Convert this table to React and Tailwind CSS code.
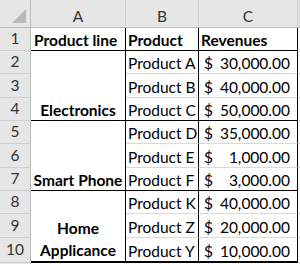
import React from 'react';

const rows = [
  { n: 1, b: 'Product', c: null, h: 'border-b-black' },
  { n: 2, b: 'Product A', c: '30,000.00' },
  { n: 3, b: 'Product B', c: '40,000.00' },
  { n: 4, b: 'Product C', c: '50,000.00', h: 'border-b-black' },
  { n: 5, b: 'Product D', c: '35,000.00' },
  { n: 6, b: 'Product E', c: '1,000.00' },
  { n: 7, b: 'Product F', c: '3,000.00', h: 'border-b-black' },
  { n: 8, b: 'Product K', c: '40,000.00' },
  { n: 9, b: 'Product Z', c: '20,000.00' },
  { n: 10, b: 'Product Y', c: '10,000.00', h: 'border-b-black' },
];

// row number -> grid line
const rowLine = ['row-start-2', 'row-start-3', 'row-start-4', 'row-start-5', 'row-start-6', 'row-start-7', 'row-start-8', 'row-start-9', 'row-start-10', 'row-start-11'];

function App() {
  return (
    <div className="w-[300px] h-[264px] overflow-hidden bg-white text-[15.5px] text-black font-['Lato','Liberation_Sans',sans-serif]">
      <div className="grid grid-cols-[31px_95px_73px_99px_1fr] grid-rows-[28px_23px_23px_24px_23px_23px_24px_23px_23px_24px_25px_1fr] h-full">
        {/* Header row */}
        <div className="bg-[#e6e6e6] border-r border-b border-[#bdbdbd] flex items-end justify-end p-[3px]">
          <svg width="16" height="16" viewBox="0 0 16 16">
            <polygon points="15,1 15,15 1,15" fill="#b9b9b9" />
          </svg>
        </div>
        {['A', 'B', 'C', ''].map((l, i) => (
          <div
            key={i}
            className="bg-[#e6e6e6] border-r border-b border-r-[#d0d0d0] border-b-[#bdbdbd] flex items-end justify-center pb-[2px] text-[#333] leading-none"
          >
            <span className="mb-[1px]">{l}</span>
          </div>
        ))}

        {rows.map((r, i) => (
          <React.Fragment key={r.n}>
            <div className={`${rowLine[i]} col-start-1 bg-[#e6e6e6] border-r border-b border-r-[#bdbdbd] border-b-[#d0d0d0] flex items-center justify-center text-[#333]`}>
              {r.n}
            </div>
            <div
              className={`${rowLine[i]} col-start-3 border-r border-r-black border-b ${r.h || 'border-b-[#d9d9d9]'} ${r.n === 10 ? 'border-b-2' : ''} flex items-end px-[2px] leading-[20px] whitespace-nowrap ${r.n === 1 ? 'font-bold' : ''}`}
            >
              {r.b}
            </div>
            <div
              className={`${rowLine[i]} col-start-4 border-r border-r-black border-b ${r.h || 'border-b-[#d9d9d9]'} ${r.n === 10 ? 'border-b-2' : ''} flex items-end justify-between pl-[5px] pr-[7px] leading-[20px]`}
            >
              {r.c ? (
                <>
                  <span>$</span>
                  <span>{r.c}</span>
                </>
              ) : (
                <span className="font-bold -ml-[3px]">Revenues</span>
              )}
            </div>
            <div className={`${rowLine[i]} col-start-5 border-b border-b-[#d9d9d9]`} />
          </React.Fragment>
        ))}

        {/* Column A (merged cells) */}
        <div className="row-start-2 col-start-2 border-r border-r-black border-b border-b-black flex items-end px-[3px] font-bold leading-[20px] whitespace-nowrap">
          Product line
        </div>
        <div className="row-start-3 row-span-3 col-start-2 border-r border-r-black border-b border-b-black flex items-end justify-center font-bold leading-[20px]">
          Electronics
        </div>
        <div className="row-start-6 row-span-3 col-start-2 border-r border-r-black border-b border-b-black flex items-end justify-center font-bold leading-[20px] whitespace-nowrap">
          Smart Phone
        </div>
        <div className="row-start-9 row-span-3 col-start-2 border-r border-r-black border-b-2 border-b-black flex items-end justify-center text-center font-bold leading-[22px]">
          Home<br />Applicance
        </div>

        {/* bottom filler */}
        <div className="row-start-12 col-start-1 bg-[#e6e6e6] border-r border-r-[#bdbdbd]" />
      </div>
    </div>
  );
}

export default App;
